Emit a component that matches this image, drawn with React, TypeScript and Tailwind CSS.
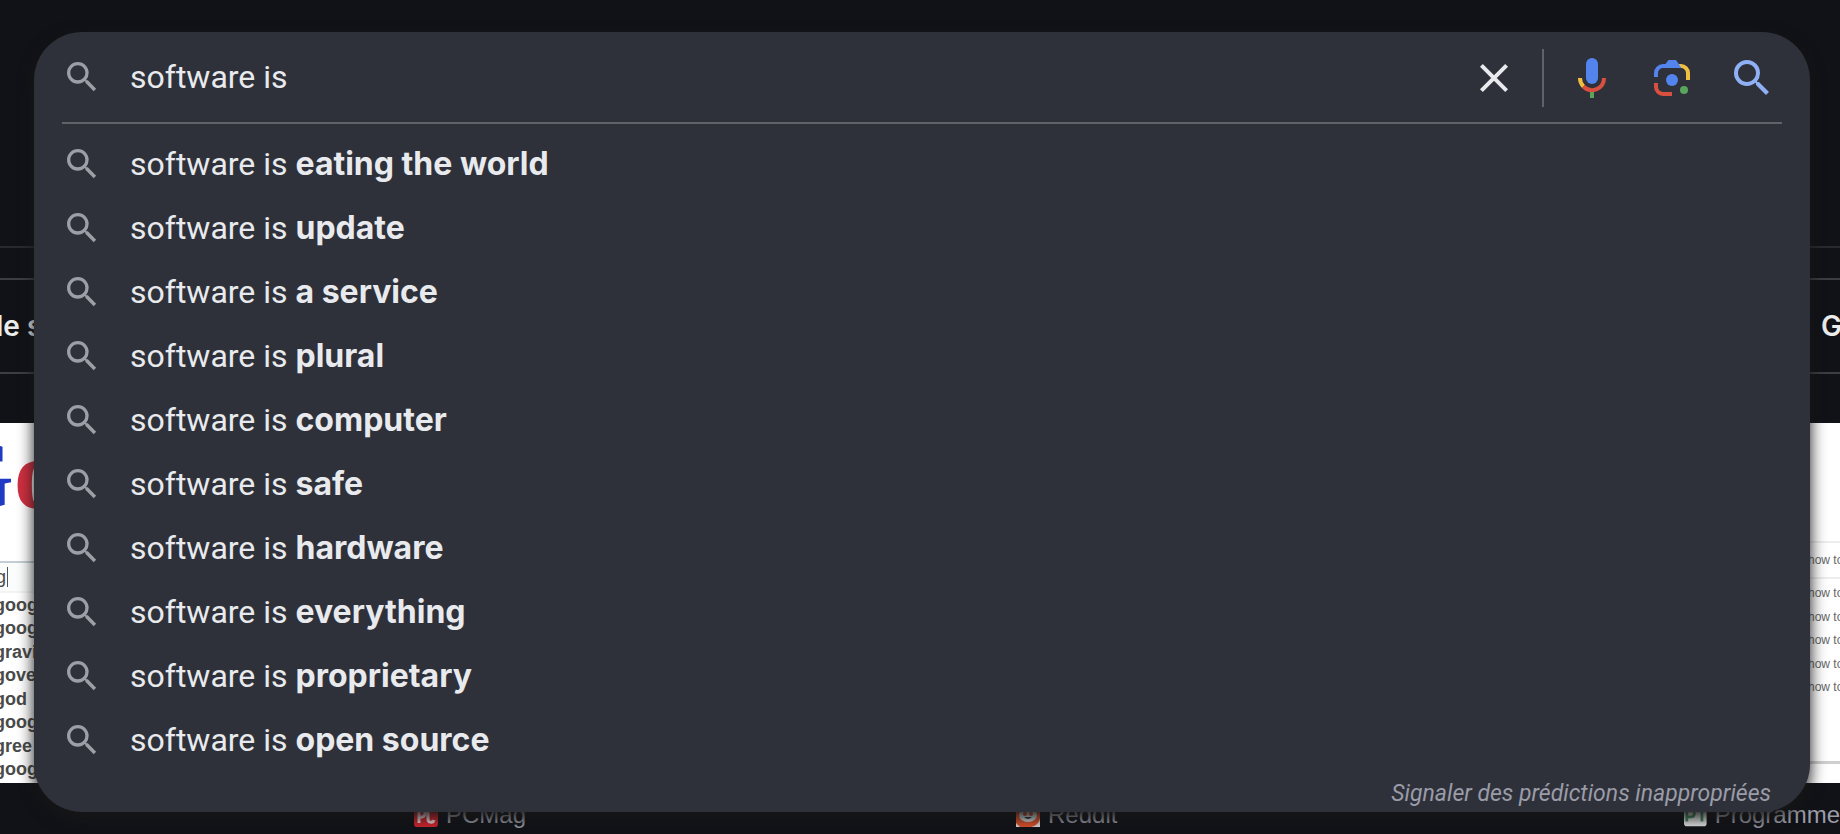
import { useState } from "react";

const suggestions = [
  "eating the world",
  "update",
  "a service",
  "plural",
  "computer",
  "safe",
  "hardware",
  "everything",
  "proprietary",
  "open source",
];

const leftWords = ["goog", "goog", "gravi", "gove", "god", "goog", "gree", "goog"];

function SearchIcon({ className }: { className?: string }) {
  return (
    <svg viewBox="0 0 24 24" fill="currentColor" aria-hidden="true" className={className}>
      <path d="M15.5 14h-.79l-.28-.27A6.471 6.471 0 0 0 16 9.5 6.5 6.5 0 1 0 9.5 16c1.61 0 3.09-.59 4.23-1.57l.27.28v.79l5 4.99L20.49 19l-4.99-5zm-6 0C7.01 14 5 11.99 5 9.5S7.01 5 9.5 5 14 7.01 14 9.5 11.99 14 9.5 14z" />
    </svg>
  );
}

function CloseIcon() {
  return (
    <svg viewBox="0 0 24 24" fill="none" aria-hidden="true" className="size-12">
      <path d="M5.700 5.700l12.600 12.600M18.300 5.700L5.700 18.300" stroke="#e8eaed" strokeWidth="2" />
    </svg>
  );
}

function MicIcon() {
  return (
    <svg viewBox="0 0 48 48" fill="none" aria-hidden="true" className="size-12">
      <rect x="18" y="4" width="12" height="26" rx="6" fill="#5383ec" />
      <path d="M22 37h4v7h-4z" fill="#58a55c" />
      <path d="M12 24a12 12 0 0 0 3.5 8.5" stroke="#f1be42" strokeWidth="4" />
      <path d="M15.5 32.5A12 12 0 0 0 36 24" stroke="#d85040" strokeWidth="4" />
    </svg>
  );
}

function LensIcon() {
  return (
    <svg viewBox="0 0 48 48" aria-hidden="true" className="size-12">
      <path d="M31 10h2a9 9 0 0 1 9 9v7h-4v-7a5 5 0 0 0-5-5h-2z" fill="#f1be42" />
      <path d="M6 23v-4a9 9 0 0 1 9-9h2.500l3-4h7.500l5.500 8H15a5 5 0 0 0-5 5v4z" fill="#5383ec" />
      <circle cx="24" cy="26" r="6" fill="#5383ec" />
      <path d="M6 29h4v4a5 5 0 0 0 5 5h9v4h-9a9 9 0 0 1-9-9z" fill="#d85040" />
      <circle cx="36" cy="36" r="4" fill="#58a55c" />
    </svg>
  );
}

function PcMagIcon() {
  return (
    <svg viewBox="0 0 24 24" fill="none" aria-hidden="true" className="size-6">
      <rect width="24" height="24" rx="3" fill="#d6242f" />
      <path d="M5 20V6h3a3 4 0 0 1 0 8H5M20 8c-1-3-6-3-6 1v7c0 4 5 4 6 1" stroke="#f4d9dc" strokeWidth="3" />
    </svg>
  );
}

function RedditIcon() {
  return (
    <svg viewBox="0 0 24 24" aria-hidden="true" className="size-6">
      <rect width="24" height="24" rx="3" fill="#e0532c" />
      <path d="M24 15v9H15c5-1 8-4 9-9zM0 24v-4l4 4z" fill="#e4dcd8" />
      <ellipse cx="12" cy="12" rx="9" ry="7" fill="#d7dde0" />
      <circle cx="9" cy="11" r="2" fill="#d8502a" />
      <circle cx="15" cy="11" r="2" fill="#d8502a" />
      <path d="M8 14q4 4 8 0z" fill="#30363b" />
    </svg>
  );
}

function ProgrammezIcon() {
  return (
    <svg viewBox="0 0 24 24" fill="none" aria-hidden="true" className="size-6">
      <rect width="24" height="24" rx="3" fill="#e6e6e6" />
      <path d="M3 19V6h5q3 0 3 4t-3 4H4M14 6h5v13" stroke="#3f9160" strokeWidth="3" />
    </svg>
  );
}

function Results() {
  return (
    <div className="min-h-screen overflow-hidden">
      <div className="h-62 border-b-2 border-[#292a2e]" />
      <div className="mt-[30px] flex h-24 items-center justify-between border-y-2 border-[#3d3e43] text-[28px] font-semibold text-[#ececec]">
        <span className="-ml-1">le s</span>
        <span className="-mr-0.5">G</span>
      </div>

      {/* Image thumbnails */}
      <div className="mt-[49px] flex h-90 justify-between bg-white">
        <div className="flex w-12 flex-col overflow-hidden font-['Liberation_Sans',sans-serif] text-lg font-bold text-[#4a4a4a]">
          <div className="-ml-16 h-[138px] whitespace-nowrap pt-2 font-['Liberation_Serif',serif] text-[100px] leading-[88px]">
            <span className="text-[#1f3bc4]">G</span>
            <span className="text-[#cf2f3f]">o</span>
          </div>
          <div className="h-8 border-y-2 border-t-[#c3ced4] border-b-[#f3f3f3] bg-[#fbfcfc] font-normal leading-7">
            <span className="-ml-1 border-r border-[#555] pr-px">g</span>
          </div>
          <ul className="-ml-1.5 mt-0.5 flex h-46 flex-col justify-between leading-5">
            {leftWords.map((word, i) => (
              <li key={i}>{word}</li>
            ))}
          </ul>
        </div>
        <div className="flex w-9 flex-col overflow-hidden whitespace-nowrap font-['Liberation_Sans',sans-serif] text-xs text-[#666]">
          <div className="mt-[118px] h-[38px] border-y-2 border-[#ededed] pl-1 leading-[34px]">how to</div>
          <div className="h-[185px] border-b-3 border-[#cfcfcf] pl-1 pt-1">
            <ul className="flex h-[114px] flex-col justify-between leading-5">
              {[0, 1, 2, 3, 4].map((i) => (
                <li key={i}>how to</li>
              ))}
            </ul>
          </div>
        </div>
      </div>

      {/* Sources under the thumbnails */}
      <div className="mt-[18px] grid grid-cols-[602fr_668fr_156fr] pl-[22.5%] font-['Liberation_Sans',sans-serif] text-2xl leading-7 text-[#9b9ca8]">
        <div className="flex min-w-0 items-center gap-2">
          <PcMagIcon />
          PCMag
        </div>
        <div className="flex min-w-0 items-center gap-2">
          <RedditIcon />
          Reddit
        </div>
        <div className="flex min-w-0 items-center gap-2">
          <ProgrammezIcon />
          Programme
        </div>
      </div>
    </div>
  );
}

export default function App() {
  const [query, setQuery] = useState("software is");

  return (
    <div className="relative bg-[#111217] font-[Inter,sans-serif]">
      <Results />

      {/* Search box with suggestions */}
      <form
        role="search"
        onSubmit={(e) => e.preventDefault()}
        className="absolute left-[34px] right-[30px] top-8 rounded-[48px] bg-[#2f313a] font-[Roboto,sans-serif] text-[32px] text-[#e8eaed] shadow-[0_6px_16px_0_#171717]"
      >
        <div className="mx-7 flex h-23 items-center border-b-2 border-[#5f6368] pr-1.5">
          <SearchIcon className="size-10 shrink-0 text-[#9aa0a6]" />
          <input
            type="text"
            aria-label="Rechercher"
            value={query}
            onChange={(e) => setQuery(e.target.value)}
            className="ml-7 min-w-0 flex-1 bg-transparent outline-none"
          />
          <div className="flex items-center pt-0.5">
            <button type="button" aria-label="Effacer" onClick={() => setQuery("")}>
              <CloseIcon />
            </button>
            <div className="mx-6 h-[58px] w-0.5 bg-[#5f6368]" />
            <div className="flex gap-8">
              <button type="button" aria-label="Recherche vocale">
                <MicIcon />
              </button>
              <button type="button" aria-label="Recherche par image">
                <LensIcon />
              </button>
              <button type="submit" aria-label="Recherche Google" className="text-[#8fb0f5]">
                <SearchIcon className="size-12" />
              </button>
            </div>
          </div>
        </div>

        <ul className="px-7 pt-2">
          {suggestions.map((s) => (
            <li key={s} className="flex h-16 items-center gap-7">
              <SearchIcon className="size-10 text-[#9aa0a6]" />
              <span className="leading-10">
                software is <b className="font-[Inter,sans-serif] font-bold">{s}</b>
              </span>
            </li>
          ))}
        </ul>

        <div className="flex h-10 items-center justify-end pr-[39px] pt-1">
          <a href="#" className="text-[23px] leading-7 italic text-[#9a9ca8]">
            Signaler des prédictions inappropriées
          </a>
        </div>
      </form>
    </div>
  );
}
